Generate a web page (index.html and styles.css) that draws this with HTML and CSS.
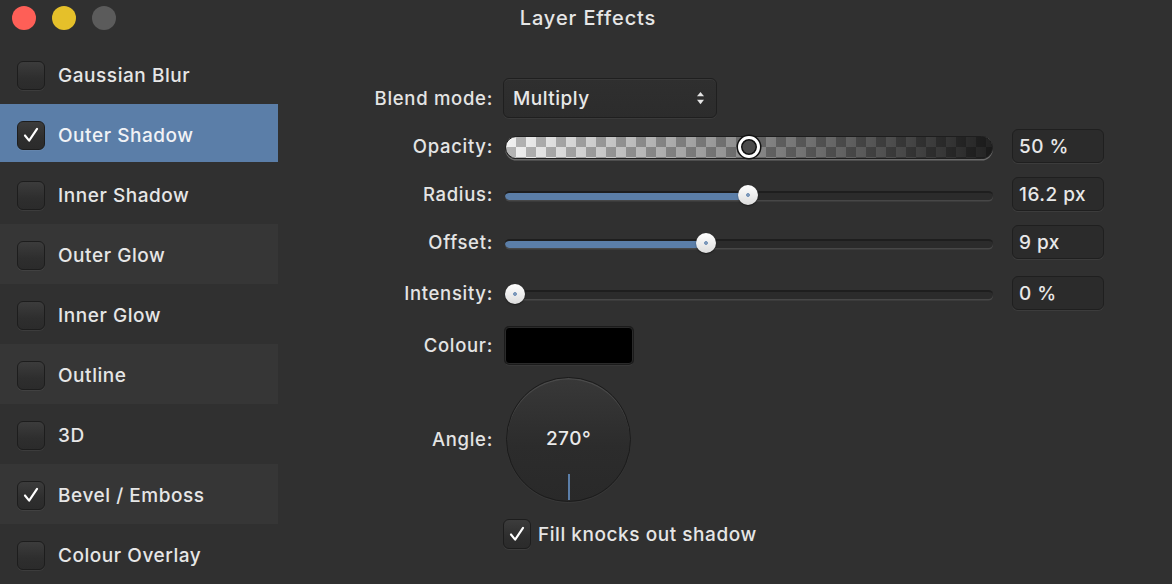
FILE: index.html
```html
<!DOCTYPE html>
<html>
<head>
<meta charset="utf-8">
<link rel="stylesheet" href="styles.css">
</head>
<body>
<div class="window">
  <header class="titlebar">
    <div class="lights">
      <span class="light red"></span>
      <span class="light yellow"></span>
      <span class="light gray"></span>
    </div>
    <div class="title">Layer Effects</div>
    <div></div>
  </header>
  <div class="content">
    <ul class="effects">
      <li class="effect"><span class="check"></span>Gaussian Blur</li>
      <li class="effect selected"><span class="check on"><svg viewBox="0 0 28 28"><path d="M7.5 14.5 L12 20 L20.5 7.5"/></svg></span>Outer Shadow</li>
      <li class="effect"><span class="check"></span>Inner Shadow</li>
      <li class="effect alt"><span class="check"></span>Outer Glow</li>
      <li class="effect"><span class="check"></span>Inner Glow</li>
      <li class="effect alt"><span class="check"></span>Outline</li>
      <li class="effect"><span class="check"></span>3D</li>
      <li class="effect alt"><span class="check on"><svg viewBox="0 0 28 28"><path d="M7.5 14.5 L12 20 L20.5 7.5"/></svg></span>Bevel / Emboss</li>
      <li class="effect"><span class="check"></span>Colour Overlay</li>
    </ul>
    <main class="settings">
      <div class="row row-blend">
        <label class="lbl">Blend mode:</label>
        <div class="select">
          <span>Multiply</span>
          <svg class="updown" viewBox="0 0 10 16"><path d="M5 1 L9 6 L1 6 Z"/><path d="M5 15 L9 10 L1 10 Z"/></svg>
        </div>
      </div>
      <div class="row row-opacity">
        <label class="lbl">Opacity:</label>
        <div class="track checker">
          <span class="ring" style="left: 50%"></span>
        </div>
        <div class="value">50 %</div>
      </div>
      <div class="row row-slider">
        <label class="lbl">Radius:</label>
        <div class="slider">
          <div class="groove"><div class="fill" style="width: 49.8%"></div></div>
          <span class="knob" style="left: 49.8%"></span>
        </div>
        <div class="value">16.2 px</div>
      </div>
      <div class="row row-slider">
        <label class="lbl">Offset:</label>
        <div class="slider">
          <div class="groove"><div class="fill" style="width: 41.2%"></div></div>
          <span class="knob" style="left: 41.2%"></span>
        </div>
        <div class="value">9 px</div>
      </div>
      <div class="row row-slider row-intensity">
        <label class="lbl">Intensity:</label>
        <div class="slider">
          <div class="groove"><div class="fill" style="width: 2%"></div></div>
          <span class="knob" style="left: 2%"></span>
        </div>
        <div class="value">0 %</div>
      </div>
      <div class="row row-colour">
        <label class="lbl">Colour:</label>
        <div class="swatch"></div>
      </div>
      <div class="row row-angle">
        <label class="lbl">Angle:</label>
        <div class="dial">
          <span class="dial-text">270°</span>
          <span class="dial-hand"></span>
        </div>
      </div>
      <div class="row row-knock">
        <span class="check small on"><svg viewBox="0 0 28 28"><path d="M7.5 14.5 L12 20 L20.5 7.5"/></svg></span>
        <span class="knock-text">Fill knocks out shadow</span>
      </div>
    </main>
  </div>
</div>
</body>
</html>
```
FILE: styles.css
```css
* { box-sizing: border-box; }
html, body {
  margin: 0;
  padding: 0;
  width: 1172px;
  height: 584px;
  overflow: hidden;
  background: #303030;
  font-family: Inter, "Liberation Sans", sans-serif;
  color: #e4e4e4;
}
.window {
  width: 1172px;
  height: 584px;
  display: flex;
  flex-direction: column;
}
.titlebar {
  height: 44px;
  flex: none;
  display: grid;
  grid-template-columns: 1fr auto 1fr;
  align-items: center;
  padding-bottom: 8px;
}
.lights {
  display: flex;
  gap: 16px;
  padding-left: 12px;
}
.light {
  width: 24px;
  height: 24px;
  border-radius: 50%;
}
.light.red { background: #fe5f57; }
.light.yellow { background: #e5c02a; }
.light.gray { background: #5b5b5b; }
.title {
  font-size: 20px;
  font-weight: 500;
  color: #e6e6e6;
  letter-spacing: 0.9px;
  padding-left: 4px;
}
.content {
  flex: 1;
  display: flex;
}
.effects {
  list-style: none;
  margin: 0;
  padding: 0;
  width: 278px;
  flex: none;
}
.effect {
  height: 60px;
  display: flex;
  align-items: center;
  gap: 13px;
  padding-left: 17px;
  padding-top: 2px;
  font-size: 19px;
  font-weight: 500;
  letter-spacing: 0.55px;
  color: #e6e6e6;
}
.effect.alt { background: #363636; }
.effect.selected {
  background: linear-gradient(#5b7ea8, #5b7ea8) top / 100% 58px no-repeat;
  color: #f0f2f6;
}
.check {
  width: 28px;
  height: 29px;
  flex: none;
  border-radius: 6px;
  background: linear-gradient(#3c3c3c, #2e2e2e 60%, #2b2b2b);
  border: 1.5px solid #1d1d1d;
  box-shadow: 0 1px 0 rgba(255,255,255,0.06);
  display: flex;
  align-items: center;
  justify-content: center;
}
.check svg {
  width: 28px;
  height: 28px;
}
.check svg path {
  fill: none;
  stroke: #ffffff;
  stroke-width: 2.3;
  stroke-linecap: round;
  stroke-linejoin: round;
}
.settings {
  flex: 1;
  padding-top: 34px;
  display: flex;
  flex-direction: column;
}
.row {
  display: flex;
  align-items: center;
}
.lbl {
  width: 215px;
  flex: none;
  text-align: right;
  font-size: 18.5px;
  font-weight: 500;
  letter-spacing: 0.7px;
  color: #e4e4e4;
}
.row-blend { height: 40px; }
.row-blend .lbl { margin-right: 10px; }
.select {
  width: 214px;
  height: 40px;
  border-radius: 6px;
  background: linear-gradient(#2f2f2f, #2c2c2c);
  border: 1px solid #1f1f1f;
  box-shadow: inset 0 1px 0 rgba(255,255,255,0.05), 0 1px 0 rgba(255,255,255,0.05);
  display: flex;
  align-items: center;
  justify-content: space-between;
  padding: 0 11px 0 9px;
  font-size: 19px;
  font-weight: 500;
  letter-spacing: 0.5px;
  color: #e8e8e8;
}
.updown {
  width: 9px;
  height: 14px;
}
.updown path { fill: #e4e4e4; }
.row-opacity { height: 34px; margin-top: 11px; }
.row-slider { height: 34px; margin-top: 14px; }
.row-intensity { margin-top: 17px; }
.row-opacity .lbl, .row-slider .lbl, .row-colour .lbl, .row-angle .lbl { margin-right: 12px; }
.track {
  position: relative;
  width: 488px;
  height: 23px;
  border-radius: 12px;
  border: 1.5px solid #1e1e1e;
  box-shadow: 0 1.5px 0 #6a6a6a;
}
.checker {
  background:
    linear-gradient(to right, rgba(0,0,0,0) 0%, rgba(0,0,0,0.86) 100%),
    conic-gradient(#b5b5b5 0 25%, #f2f2f2 0 50%, #b5b5b5 0 75%, #f2f2f2 0) 0 0 / 20px 20px;
  margin-top: 2px;
}
.ring {
  position: absolute;
  top: 50%;
  width: 22px;
  height: 22px;
  margin: -11px 0 0 -11px;
  border-radius: 50%;
  background: #4a4a4a;
  border: 3px solid #ffffff;
  box-shadow: 0 0 0 1.5px #111, inset 0 0 0 1.5px #111;
}
.value {
  margin-left: 19px;
  width: 92px;
  height: 34px;
  border-radius: 6px;
  background: #2b2b2b;
  border: 1.5px solid #1f1f1f;
  box-shadow: 0 1px 0 rgba(255,255,255,0.06);
  display: flex;
  align-items: center;
  padding-left: 6px;
  font-size: 19px;
  font-weight: 500;
  letter-spacing: 0.5px;
  color: #e8e8e8;
}
.slider {
  position: relative;
  width: 488px;
  height: 34px;
  display: flex;
  align-items: center;
}
.groove {
  width: 100%;
  height: 9px;
  border-radius: 5px;
  background: #2b2b2b;
  border-top: 2px solid #1e1e1e;
  box-shadow: 0 1.5px 0 #474747;
  overflow: hidden;
  margin-top: 2px;
}
.fill {
  height: 100%;
  background: #5b7ea8;
  border-radius: 4px 0 0 4px;
}
.knob {
  position: absolute;
  top: 50%;
  width: 20px;
  height: 20px;
  margin: -9px 0 0 -10px;
  border-radius: 50%;
  background: radial-gradient(circle at 50% 50%, #7d99bb 0 1.6px, transparent 2.2px), linear-gradient(#ffffff, #dcdcdc);
  box-shadow: 0 1px 1.5px rgba(0,0,0,0.5);
}
.row-colour { height: 36px; margin-top: 17px; }
.swatch {
  width: 128px;
  height: 37px;
  background: #000;
  border: 1.5px solid #2a2a2a;
  border-radius: 4px;
  box-shadow: 0 0 0 1px #1b1b1b, 0 1.5px 0 rgba(255,255,255,0.08);
}
.row-angle { height: 124px; margin-top: 14px; }
.row-angle .lbl { margin-right: 13px; }
.dial {
  position: relative;
  width: 125px;
  height: 125px;
  border-radius: 50%;
  background: linear-gradient(#383838, #2c2c2c 55%, #292929);
  border: 1.5px solid #1b1b1b;
  box-shadow: inset 0 1.5px 0 rgba(255,255,255,0.09), 0 1px 0 rgba(255,255,255,0.04);
  display: flex;
  align-items: center;
  justify-content: center;
}
.dial-text {
  font-size: 19px;
  font-weight: 500;
  letter-spacing: 0.5px;
  color: #eaeaea;
  margin-top: -2px;
}
.dial-hand {
  position: absolute;
  left: 50%;
  bottom: 1px;
  width: 2px;
  height: 26px;
  margin-left: -1px;
  background: #5b7ea8;
}
.row-knock { height: 30px; margin-top: 18px; padding-left: 225px; }
.check.small {
  width: 28px;
  height: 30px;
}
.knock-text {
  margin-left: 7px;
  font-size: 19px;
  font-weight: 500;
  letter-spacing: 0.55px;
  color: #e6e6e6;
}
```
